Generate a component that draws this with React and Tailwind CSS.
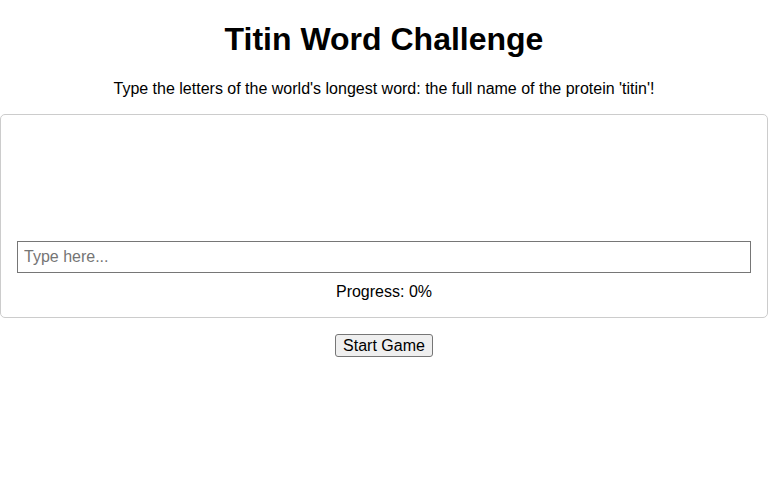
import { useState } from "react";

const App = () => {
  const [value, setValue] = useState("");

  return (
    <div className="min-h-screen bg-white text-black text-center font-['Liberation_Sans',Arial,sans-serif]">
      <h1 className="pt-[21px] mb-[22px] text-[32px] leading-[37px] font-bold">
        Titin Word Challenge
      </h1>
      <p className="mb-4 text-base leading-[18px]">
        Type the letters of the world's longest word: the full name of the protein 'titin'!
      </p>

      {/* Game area */}
      <div className="border border-[#cccccc] rounded-[5px] p-4">
        <div className="h-[100px] mb-[10px]"></div>
        <input
          type="text"
          value={value}
          onChange={(e) => setValue(e.target.value)}
          placeholder="Type here..."
          className="block w-full h-8 px-[6px] border border-[#767676] text-base leading-[18px] placeholder:text-[#757575] outline-none"
        />
        <p className="mt-[10px] text-base leading-[18px]">Progress: 0%</p>
      </div>

      <button className="mt-4 px-[7px] py-px bg-[#efefef] border border-[#767676] rounded-[3px] text-base leading-[19px]">
        Start Game
      </button>
    </div>
  );
};

export default App;
